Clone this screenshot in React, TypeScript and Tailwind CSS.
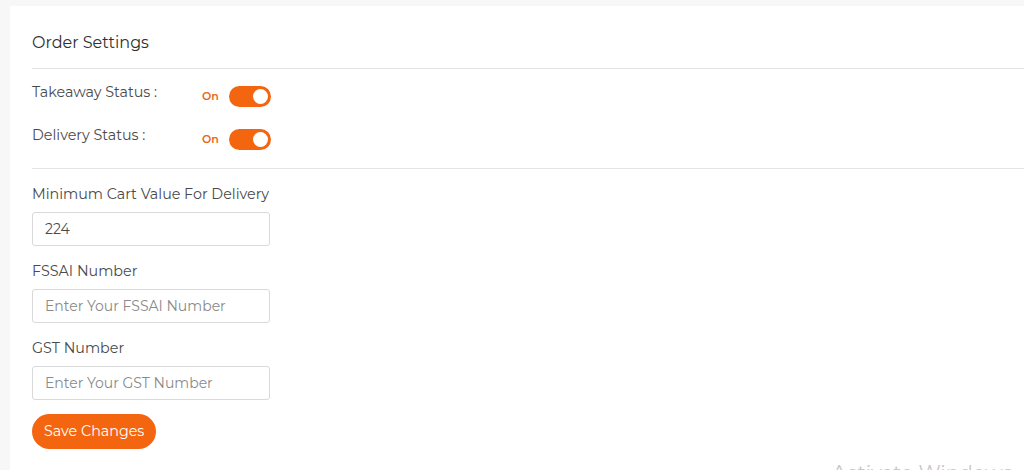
import { useState } from "react";

function Toggle({ on, onChange }: { on: boolean; onChange: () => void }) {
  return (
    <div className="flex items-center gap-[10px]">
      <span className="w-[17px] text-[11px] font-semibold text-[#e8671c]">{on ? "On" : "Off"}</span>
      <button
        type="button"
        onClick={onChange}
        className={`flex h-[21px] w-[42px] items-center rounded-full px-[3px] ${on ? "justify-end bg-[#f4650f]" : "justify-start bg-gray-300"}`}
      >
        <span className="h-[15px] w-[15px] rounded-full bg-white" />
      </button>
    </div>
  );
}

function Field({ label, placeholder, value }: { label: string; placeholder: string; value?: string }) {
  return (
    <div className="flex flex-col">
      <label className="text-[14.3px] leading-5 text-[#4a4a4a]">{label}</label>
      <input
        defaultValue={value}
        placeholder={placeholder}
        className="mt-[8px] h-[34px] w-[238px] rounded-[3px] border border-[#d9d9d9] bg-white px-3 text-[14px] text-[#4a4a4a] outline-none placeholder:text-[#8a8a8a]"
      />
    </div>
  );
}

export default function App() {
  const [takeaway, setTakeaway] = useState(true);
  const [delivery, setDelivery] = useState(true);

  return (
    <div
      className="relative h-[470px] w-full overflow-hidden bg-[#f7f7f7] pl-[10px] pt-[6px]"
      style={{ fontFamily: "Montserrat, 'Open Sans', sans-serif" }}
    >
      <div className="h-full bg-white pl-[22px]">
        <h2 className="pt-[27px] text-[16px] font-normal leading-5 text-[#2f2f2f]">Order Settings</h2>
        <div className="mt-[15px] border-t border-[#e4e4e4]" />

        <div className="flex flex-col gap-[18px] pt-[13px]">
          <div className="flex items-start">
            <span className="w-[170px] text-[14.3px] leading-5 text-[#4a4a4a]">Takeaway Status :</span>
            <div className="mt-[4px]">
              <Toggle on={takeaway} onChange={() => setTakeaway(!takeaway)} />
            </div>
          </div>
          <div className="flex items-start">
            <span className="w-[170px] text-[14.3px] leading-5 text-[#4a4a4a]">Delivery Status :</span>
            <div className="mt-[4px]">
              <Toggle on={delivery} onChange={() => setDelivery(!delivery)} />
            </div>
          </div>
        </div>

        <div className="mt-[18px] border-t border-[#e4e4e4]" />

        <div className="flex flex-col gap-[15px] pt-[15px]">
          <Field label="Minimum Cart Value For Delivery" placeholder="" value="224" />
          <Field label="FSSAI Number" placeholder="Enter Your FSSAI Number" />
          <Field label="GST Number" placeholder="Enter Your GST Number" />
        </div>

        <button
          type="button"
          className="mt-[14px] h-[35px] rounded-full bg-[#f4650f] px-[12px] text-[14.3px] text-white"
        >
          Save Changes
        </button>
      </div>

      <span className="absolute left-[832px] top-[458px] text-[20px] text-[#c8c8c8]">Activate Windows</span>
    </div>
  );
}
